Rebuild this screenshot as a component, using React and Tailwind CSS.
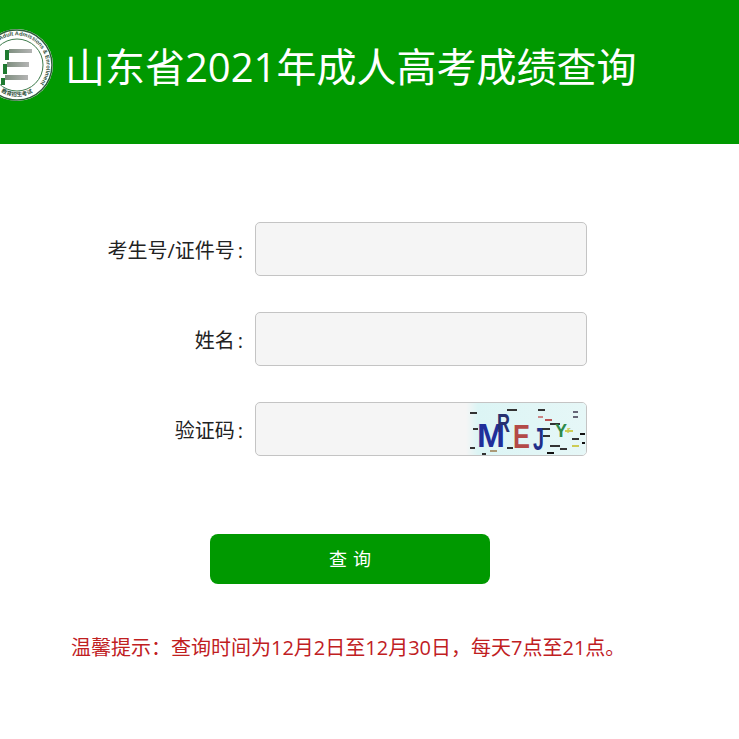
const cjk = { fontFamily: '"Open Sans", "Noto Sans CJK SC", sans-serif' };

function Logo() {
  return (
    <svg width="74" height="74" viewBox="0 0 74 74" className="shrink-0">
      <circle cx="37" cy="37" r="36" fill="#ffffff" />
      <circle cx="37" cy="37" r="35" fill="none" stroke="#2f5d3a" strokeWidth="1.5" />
      <circle cx="37" cy="37" r="26" fill="none" stroke="#3c7a4a" strokeWidth="1" />
      <defs>
        <path id="logo-top" d="M 20 12.3 A 30 30 0 0 1 60 56" />
        <path id="logo-bottom" d="M 21 64 A 32 32 0 0 0 56 62.5" />
        <linearGradient id="bar" x1="0" x2="1" y1="0" y2="0">
          <stop offset="0" stopColor="#7f8f80" />
          <stop offset="1" stopColor="#b4b4b4" />
        </linearGradient>
      </defs>
      <text fontSize="5.6" fontWeight="700" fill="#2f4f3a" style={{ fontFamily: '"Liberation Sans", sans-serif' }}>
        <textPath href="#logo-top">Adult Admissions & Enrollment</textPath>
      </text>
      <text fontSize="5.5" fontWeight="700" fill="#2f4f3a" style={{ fontFamily: '"Noto Sans CJK SC", sans-serif' }}>
        <textPath href="#logo-bottom">教育招生考试</textPath>
      </text>
      <path d="M25 22 h4 v10 h-4 z M23 36 h4 v10 h-4 z M21 50 h4 v7 h-4 z" fill="#1f7a30" />
      <rect x="29" y="21" width="23" height="4" fill="url(#bar)" />
      <rect x="27" y="34" width="22" height="5" fill="url(#bar)" />
      <rect x="25" y="47" width="23" height="5" fill="url(#bar)" />
    </svg>
  );
}

function Captcha() {
  const dashes = [
    [4, 9, 7, '#333'], [41, 6, 10, '#333'], [72, 6, 7, '#333'], [107, 8, 5, '#667'],
    [107, 13, 5, '#667'], [72, 13, 5, '#c88'], [79, 16, 7, '#b55'], [84, 20, 10, '#333'],
    [7, 25, 5, '#333'], [76, 25, 8, '#333'], [77, 32, 7, '#333'], [114, 30, 5, '#111'],
    [106, 35, 7, '#333'], [99, 27, 8, '#cc5'], [116, 39, 3, '#111'], [84, 42, 10, '#333'],
    [94, 45, 7, '#333'], [106, 42, 7, '#cc5'], [81, 49, 7, '#111'], [16, 50, 4, '#333'],
    [4, 44, 5, '#333'], [41, 44, 6, '#333'], [24, 47, 7, '#a97'],
  ];
  return (
    <svg
      width="120"
      height="52"
      viewBox="0 0 120 52"
      className="block"
      style={{ background: 'linear-gradient(90deg,#f5f5f500,#dcf5f5 10%,#e6f7f7 100%)' }}
    >
      {dashes.map(([x, y, w, c], i) => (
        <rect key={i} x={x} y={y} width={w} height="2" fill={c} />
      ))}
      <g fontWeight="700" style={{ fontFamily: '"Liberation Sans", sans-serif' }}>
        <text x="11" y="44" fontSize="33" textLength="28" lengthAdjust="spacingAndGlyphs" fill="#1f2f9a">M</text>
        <text x="31" y="29" fontSize="25" textLength="13" lengthAdjust="spacingAndGlyphs" fill="#26306f">R</text>
        <text x="47" y="45" fontSize="34" textLength="17" lengthAdjust="spacingAndGlyphs" fill="#b34a48">E</text>
        <text x="67" y="47" fontSize="31" textLength="11" lengthAdjust="spacingAndGlyphs" fill="#1f2f8a">J</text>
        <text x="89" y="34" fontSize="19" textLength="12" lengthAdjust="spacingAndGlyphs" fill="#2f8a4a">Y</text>
        <text x="101" y="30" fontSize="9" fill="#c9c94a">r</text>
      </g>
    </svg>
  );
}

function Row({ label, children }) {
  return (
    <div className="flex items-center h-[54px]">
      <div className="w-[255px] pr-[12px] pt-[4px] text-right text-[20px] leading-none text-[#222222]" style={cjk}>
        {label}
        <span className="ml-[3px]">:</span>
      </div>
      <div className="w-[332px] h-[54px] rounded-[5px] border border-[#c4c4c4] bg-[#f5f5f5] flex justify-end items-center overflow-hidden">
        {children}
      </div>
    </div>
  );
}

export default function App() {
  return (
    <div className="w-[739px] h-[739px] bg-white overflow-hidden" style={cjk}>
      <header className="h-[144px] bg-[#009900] flex items-center">
        <div className="ml-[-20px] mt-[-14px]">
          <Logo />
        </div>
        <h1 className="ml-[11px] mt-[-10px] text-[40px] leading-none font-normal text-white whitespace-nowrap">
          山东省2021年成人高考成绩查询
        </h1>
      </header>
      <main className="pt-[78px]">
        <div className="flex flex-col gap-[36px]">
          <Row label="考生号/证件号" />
          <Row label="姓名" />
          <Row label="验证码">
            <Captcha />
          </Row>
        </div>
        <button className="block ml-[210px] mt-[78px] w-[280px] h-[50px] rounded-[8px] bg-[#009900] text-white text-[18px] [word-spacing:1.3px]">
          查 询
        </button>
        <p className="ml-[71px] mt-[50px] text-[20px] leading-[28px] text-[#c0201f] whitespace-nowrap">
          温馨提示：查询时间为12月2日至12月30日，每天7点至21点。
        </p>
      </main>
    </div>
  );
}
